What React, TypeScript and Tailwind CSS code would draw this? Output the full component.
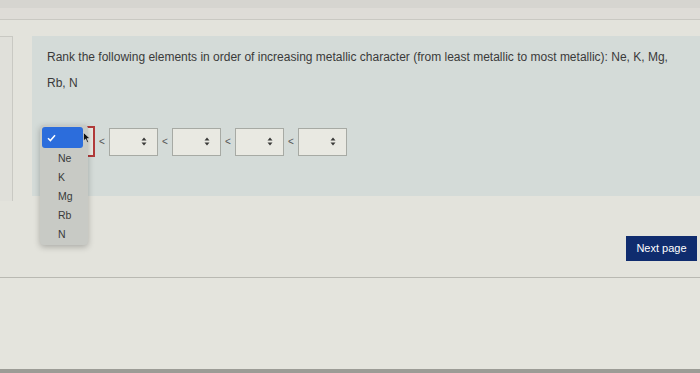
import React from "react";

const font = { fontFamily: '"Liberation Sans", Arial, sans-serif' };

const Spinner = () => (
  <svg width="6" height="9" viewBox="0 0 6 9" className="shrink-0">
    <path d="M3 0.5 L5.5 3.5 H0.5 Z" fill="#3a3a38" />
    <path d="M3 8.5 L5.5 5.5 H0.5 Z" fill="#3a3a38" />
  </svg>
);

const SelectBox = () => (
  <div className="w-[49px] h-[28px] border border-[#a7aaa4] bg-[#e9e9e2] flex items-center justify-end pr-[10px]">
    <Spinner />
  </div>
);

const Less = () => <span className="text-[10px] text-[#555] w-[14px] text-center leading-none">&lt;</span>;

const options = ["Ne", "K", "Mg", "Rb", "N"];

export default function App() {
  return (
    <div
      className="w-[700px] h-[373px] bg-[#e3e3dc] overflow-hidden relative flex flex-col text-[#3a3a3a]"
      style={font}
    >
      {/* top browser strip */}
      <div className="h-[8px] bg-[#d6d5d0]" />
      <div className="h-[12px] bg-[#dedcd7] border-b border-[#c9c8c2]" />

      <div className="flex mt-[16px]">
        <div className="w-[13px] h-[165px] border-t border-r border-[#c9c9c3] bg-[#e0e0da]" />
        <div className="ml-[19px] flex-1 h-[160px] bg-[#d4dbd8] pl-[15px] pt-[8px]">
          <p className="text-[12px] leading-[26px]">
            Rank the following elements in order of increasing metallic character (from least metallic to most metallic): Ne, K, Mg,
            <br />
            Rb, N
          </p>

          <div className="mt-[30px] flex items-center">
            <div className="relative w-[48px] h-[31px] border-2 border-[#b23a3a] bg-[#e9e9e2]">
              {/* native dropdown menu */}
              <div className="absolute left-[-9px] top-[-3px] w-[48px] h-[120px] rounded-[4px] bg-[#c8cac5] shadow-[0_2px_6px_rgba(0,0,0,0.25)] p-[2px] z-10">
                <div className="h-[21px] w-[41px] rounded-[3px] bg-[#2c6ddc] flex items-center pl-[5px]">
                  <svg width="9" height="8" viewBox="0 0 9 8">
                    <path d="M1 4.2 L3.4 6.6 L8 1.2" stroke="#fff" strokeWidth="1.5" fill="none" />
                  </svg>
                </div>
                <div className="flex flex-col pt-[1px]">
                  {options.map((o) => (
                    <span key={o} className="h-[19px] leading-[19px] pl-[16px] text-[10.5px] text-[#3a3a3a]">
                      {o}
                    </span>
                  ))}
                </div>
              </div>
              {/* mouse pointer */}
              <svg width="8" height="11" viewBox="0 0 8 11" className="absolute left-[34px] top-[4px] z-20">
                <path d="M0.5 0.5 L0.5 9 L2.6 7 L4.2 10.5 L5.6 9.9 L4.1 6.6 L7 6.6 Z" fill="#111" stroke="#eee" strokeWidth="0.6" />
              </svg>
            </div>
            <Less />
            <SelectBox />
            <Less />
            <SelectBox />
            <Less />
            <SelectBox />
            <Less />
            <SelectBox />
          </div>
        </div>
      </div>

      <div className="flex justify-end pr-[3px] mt-[35px]">
        <button className="w-[71px] h-[25px] bg-[#0f2c6e] text-white text-[11px]">Next page</button>
      </div>

      <div className="mt-[16px] border-t border-[#b9b9b2]" />
      <div className="flex-1 bg-[#e4e4dd]" />
      <div className="h-[4px] bg-[#9c9c96]" />
    </div>
  );
}
